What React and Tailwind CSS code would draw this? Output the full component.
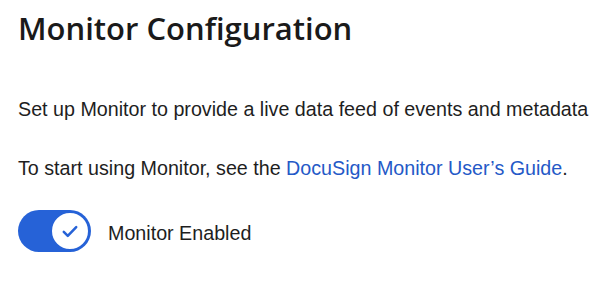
export default function App() {
  return (
    <div className="w-[592px] h-[302px] bg-white px-[18px] pt-[10px] text-[#1e1e1e] overflow-hidden">
      <h1 className="text-[31px] leading-[36px] font-semibold text-[#1a1a1a]" style={{ fontFamily: '"Open Sans", sans-serif' }}>
        Monitor Configuration
      </h1>
      <div className="mt-[52px] text-[19.7px] leading-[22px] whitespace-nowrap" style={{ fontFamily: '"Liberation Sans", Arial, sans-serif' }}>
        <p>Set up Monitor to provide a live data feed of events and metadata</p>
        <p className="mt-[37px]">
          To start using Monitor, see the <a className="text-[#2459c7]">DocuSign Monitor User’s Guide</a>.
        </p>
        <div className="mt-[31px] flex items-center gap-[17px]">
          <div className="w-[73px] h-[42px] rounded-full bg-[#2662d7] flex items-center justify-end p-[1px]">
            <div className="w-[40px] h-[40px] rounded-full bg-white border-2 border-[#2662d7] flex items-center justify-center">
              <svg width="16" height="13" viewBox="0 0 18 14" fill="none">
                <path d="M2 7.5 L6.5 12 L16 2" stroke="#2662d7" strokeWidth="2.8" strokeLinecap="round" strokeLinejoin="round" />
              </svg>
            </div>
          </div>
          <span className="pt-[3px]">Monitor Enabled</span>
        </div>
      </div>
    </div>
  );
}
